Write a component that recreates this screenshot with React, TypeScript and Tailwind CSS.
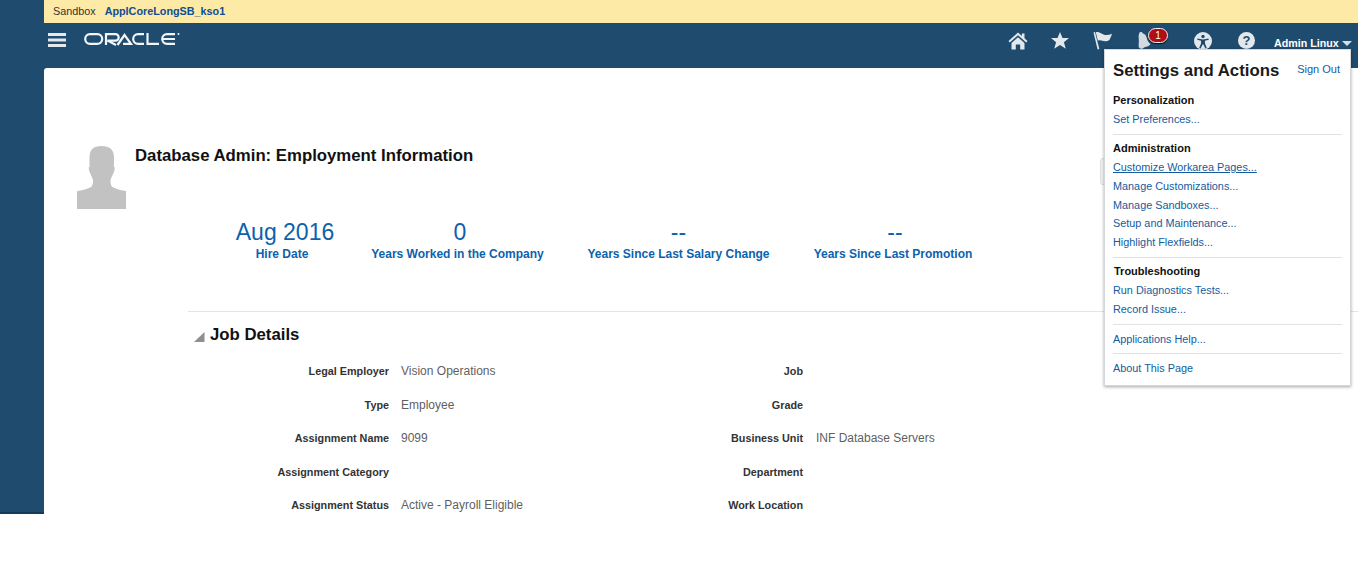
import React from 'react';

const menuLink = 'block text-[10.850px] leading-[14px] text-[#145c9e]';

function MenuIcon() {
  return (
    <svg width="18" height="14" viewBox="0 0 18 14" fill="#e3e8ec">
      <rect x="0" y="0" width="18" height="3" />
      <rect x="0" y="5.500" width="18" height="3" />
      <rect x="0" y="11" width="18" height="3" />
    </svg>
  );
}

function OracleLogo() {
  return (
    <svg width="96" height="14" viewBox="0 0 96 14" fill="none" stroke="#f2f5f7" strokeWidth="2.2">
      <rect x="1.2" y="2.2" width="17" height="9.6" rx="4.8" />
      <path d="M22 13V2.2h9.5a3 3 0 0 1 0 6.4H23.5L32 13" />
      <path d="M33.5 13 40.5 3 47 11.8H39" />
      <path d="M60 2.2h-6a4.8 4.8 0 0 0 0 9.6h6" />
      <path d="M63.5 1v10.8H75" />
      <path d="M91 2.2h-8a4.8 4.8 0 0 0 0 9.6h8M78.5 7H91" />
      <circle cx="94.500" cy="2" r="1" fill="#f2f5f7" stroke="none" />
    </svg>
  );
}

function HomeIcon() {
  return (
    <svg width="20" height="18" viewBox="0 0 20 18" fill="#e3e8ec">
      <path d="M10 0.5 0.5 9l1.3 1.4L10 3.2l8.2 7.2L19.5 9l-3-2.7V1.5h-2.6v2.5z" />
      <path d="M3.5 11 10 5.2 16.500 11v6.500h-4.300v-5H7.800v5H3.500z" />
    </svg>
  );
}

function StarIcon() {
  return (
    <svg width="18" height="17" viewBox="0 0 18 17" fill="#e3e8ec">
      <path d="M9 0l2.500 6h6.500l-5.100 4.200 1.900 6.500L9 13l-5.800 3.700 1.900-6.500L0 6h6.500z" />
    </svg>
  );
}

function FlagIcon() {
  return (
    <svg width="20" height="19" viewBox="0 0 20 19" fill="#e3e8ec">
      <path d="M0.500 1.500 2 1l4.300 17-1.700.500z" />
      <path d="M2.800 1.200C6 .5 8 2.500 10.500 3.500c2.500 1 5.500.5 8.500-.8-.6 2-1.400 4-2.600 6.300-2 1.500-4.900 1.500-6.900.8-1.500-.5-3-.8-4.600 0z" />
    </svg>
  );
}

function BellIcon() {
  return (
    <svg width="14" height="17" viewBox="0 0 14 17" fill="#d3dbe1">
      <path d="M3 0c1.500-.3 2.500.5 3 1.500 2.500.8 3.500 3 4 5.500.5 2.200 2 3.500 3.500 5-1.200 2-3.500 2.800-6 3.300-.8 1-2 1.700-3.500 1.500-1.300-.2-2-1-2.300-2C1.500 12.500 2 10 1.800 7.500 1.600 5.500 1.400 3.500 2 2c.2-.8.400-1.500 1-2z" />
    </svg>
  );
}

function AccessibilityIcon() {
  return (
    <svg width="18" height="18" viewBox="0 0 18 18">
      <circle cx="9" cy="9" r="9" fill="#e3e8ec" />
      <circle cx="9" cy="4.500" r="1.700" fill="#1f4b6e" />
      <path d="M3.500 6.500 9 7.500l5.500-1 .3 1.300-3.800 1v2.700l1.800 4.500-1.300.5L9 12l-2.500 4.500-1.300-.5L7 11.500V8.800l-3.800-1z" fill="#1f4b6e" />
    </svg>
  );
}

function HelpIcon() {
  return (
    <div className="flex h-[17px] w-[17px] items-center justify-center rounded-full bg-[#e3e8ec] text-[13px] leading-none font-bold text-[#1f4b6e]">
      ?
    </div>
  );
}

function AvatarIcon() {
  return (
    <svg width="49" height="63" viewBox="0 0 49 62" preserveAspectRatio="none" fill="#c2c2c2">
      <path d="M24.500 0c8 0 12.500 3.500 12.500 11 0 4 .2 6.500-.3 9 1.300 0 1.300 3.500 0 6-1 2-1.700 4-2.700 6-1 2.500-.5 6 1 8 3 2 8 3 14.500 4.500V62H0V44.500c6.500-1.500 11.500-2.500 14.500-4.500 1.500-2 2-5.500 1-8-1-2-1.700-4-2.700-6-1.300-2.500-1.300-6 0-6-.5-2.500-.3-5-.3-9C12.500 3.500 16.500 0 24.500 0z" />
    </svg>
  );
}

function Stat({ value, label, className, valueClass = '', labelClass = '' }: { value: string; label: string; className: string; valueClass?: string; labelClass?: string }) {
  return (
    <div className={`flex flex-col items-center text-[#0b62ad] ${className}`}>
      <div className={`text-[23px] leading-[28px] whitespace-nowrap ${valueClass}`}>{value}</div>
      <div className={`text-[12px] leading-[16px] font-bold whitespace-nowrap ${labelClass}`}>{label}</div>
    </div>
  );
}

const leftFields = [
  ['Legal Employer', 'Vision Operations'],
  ['Type', 'Employee'],
  ['Assignment Name', '9099'],
  ['Assignment Category', ''],
  ['Assignment Status', 'Active - Payroll Eligible'],
];

const rightFields = [
  ['Job', ''],
  ['Grade', ''],
  ['Business Unit', 'INF Database Servers'],
  ['Department', ''],
  ['Work Location', ''],
];

function FieldColumn({ fields, labelWidth, width, gap }: { fields: string[][]; labelWidth: string; width: string; gap: string }) {
  return (
    <div className={`flex flex-col gap-[19.500px] ${width}`}>
      {fields.map(([label, value]) => (
        <div key={label} className="flex h-[14px] items-center leading-[14px]">
          <div className={`${labelWidth} shrink-0 text-right text-[10.800px] font-bold text-[#333333]`}>{label}</div>
          <div className={`${gap} text-[12px] text-[#5f5f5f]`}>{value}</div>
        </div>
      ))}
    </div>
  );
}

export default function App() {
  return (
    <div className="relative h-[567px] w-[1358px] overflow-hidden bg-white font-['Liberation_Sans',Arial,sans-serif]">
      <div className="flex h-[514px]">
        <div className="w-[44px] shrink-0 border-b-2 border-[#123a5c] bg-[#1f4b6e]" />
        <div className="flex min-w-0 flex-1 flex-col bg-[#1f4b6e]">
          {/* Sandbox bar */}
          <div className="flex h-[23px] shrink-0 items-center bg-[#fdeaa7] pl-[9px] text-[10.800px]">
            <span className="text-[#333333]">Sandbox</span>
            <span className="ml-[9px] font-bold text-[#0f4c96]">ApplCoreLongSB_kso1</span>
          </div>

          {/* Top nav */}
          <div className="flex h-[45px] shrink-0 items-start">
            <div className="mt-[10px] ml-[4px]"><MenuIcon /></div>
            <div className="mt-[9px] ml-[18px]"><OracleLogo /></div>
            <div className="ml-auto flex items-start">
              <div className="mt-[9px]"><HomeIcon /></div>
              <div className="mt-[9px] ml-[23px]"><StarIcon /></div>
              <div className="mt-[8px] ml-[24px]"><FlagIcon /></div>
              <div className="relative mt-[9px] ml-[24px]">
                <BellIcon />
                <div className="absolute -top-[4px] left-[11px] flex h-[15px] w-[20px] items-center justify-center rounded-full border border-[#f5f5f5] bg-[#b00d14] text-[10px] text-white shadow-[0_1px_1px_rgba(0,0,0,0.8)]">
                  1
                </div>
              </div>
              <div className="mt-[9px] ml-[43px]"><AccessibilityIcon /></div>
              <div className="mt-[9px] ml-[26px]"><HelpIcon /></div>
              <div className="mt-[14px] ml-[19px] flex w-[84px] items-center text-[10.700px] leading-[13px] font-bold text-white">
                Admin Linux
                <span className="ml-[3px] h-0 w-0 border-x-[5px] border-t-[5px] border-x-transparent border-t-[#d5dde3]" />
              </div>
            </div>
          </div>

          {/* Content card */}
          <div className="min-h-0 flex-1 overflow-hidden rounded-tl-[3px] bg-white pt-[78px] pl-[33px]">
            <div className="flex items-start">
              <AvatarIcon />
              <h1 className="mt-[0px] ml-[9px] text-[16.750px] leading-[20px] font-bold text-[#111111]">
                Database Admin: Employment Information
              </h1>
            </div>

            <div className="mt-[9px] flex">
              <Stat value="Aug 2016" label="Hire Date" className="ml-[158px] w-[100px]" labelClass="pr-[6px]" />
              <Stat value="0" label="Years Worked in the Company" className="ml-[36px] w-[173px]" valueClass="pl-[5px]" />
              <Stat value="--" label="Years Since Last Salary Change" className="ml-[43px] w-[183px]" />
              <Stat value="--" label="Years Since Last Promotion" className="ml-[43px] w-[160px]" valueClass="pl-[4px]" />
            </div>

            <div className="mt-[49px] ml-[111px] h-[1px] bg-[#e1e5e8]" />

            <div className="mt-[13px] ml-[117px] flex items-center">
              <svg width="11" height="10" viewBox="0 0 11 10" className="mt-[4px]" fill="#8f8f8f">
                <path d="M10.500 0v10H0z" />
              </svg>
              <h2 className="ml-[5px] text-[16.750px] leading-[20px] font-bold text-[#111111]">Job Details</h2>
            </div>

            <div className="mt-[19px] flex">
              <FieldColumn fields={leftFields} labelWidth="w-[312px]" width="w-[600px]" gap="ml-[12px]" />
              <FieldColumn fields={rightFields} labelWidth="w-[126px]" width="" gap="ml-[13px]" />
            </div>
          </div>
        </div>
      </div>

      {/* Button partly hidden behind the popup */}
      <div className="absolute top-[158px] left-[1100px] h-[27px] w-[8px] rounded-l-[3px] border border-[#dcdfe2] bg-[#f2f3f4]" />

      {/* Settings and Actions popup */}
      <div className="absolute top-[49px] left-[1104px] h-[337px] w-[247px] border border-[#d4d8db] bg-white px-[8px] pt-[11px] shadow-[0_1px_3px_rgba(0,0,0,0.35)]">
        <div className="flex items-start justify-between pr-[2px]">
          <div className="text-[16.800px] leading-[20px] font-bold text-[#1a1a1a]">Settings and Actions</div>
          <a className="mt-[1px] text-[11px] leading-[14px] text-[#145c9e]">Sign Out</a>
        </div>
        <div className="mt-[12px] text-[11px] leading-[14px] font-bold text-[#111111]">Personalization</div>
        <a className={`${menuLink} mt-[5px]`}>Set Preferences...</a>
        <div className="mt-[8px] h-[1px] bg-[#dfe3e6]" />
        <div className="mt-[6px] text-[11px] leading-[14px] font-bold text-[#111111]">Administration</div>
        <a className={`${menuLink} mt-[5px] underline`}>Customize Workarea Pages...</a>
        <a className={`${menuLink} mt-[4.750px]`}>Manage Customizations...</a>
        <a className={`${menuLink} mt-[4.750px]`}>Manage Sandboxes...</a>
        <a className={`${menuLink} mt-[4.750px]`}>Setup and Maintenance...</a>
        <a className={`${menuLink} mt-[4.750px]`}>Highlight Flexfields...</a>
        <div className="mt-[8px] h-[1px] bg-[#dfe3e6]" />
        <div className="mt-[6px] ml-[1px] text-[11px] leading-[14px] font-bold text-[#111111]">Troubleshooting</div>
        <a className={`${menuLink} mt-[5px]`}>Run Diagnostics Tests...</a>
        <a className={`${menuLink} mt-[5px]`}>Record Issue...</a>
        <div className="mt-[8px] h-[1px] bg-[#dfe3e6]" />
        <a className={`${menuLink} mt-[7px]`}>Applications Help...</a>
        <div className="mt-[7px] h-[1px] bg-[#dfe3e6]" />
        <a className={`${menuLink} mt-[7px]`}>About This Page</a>
      </div>
    </div>
  );
}
